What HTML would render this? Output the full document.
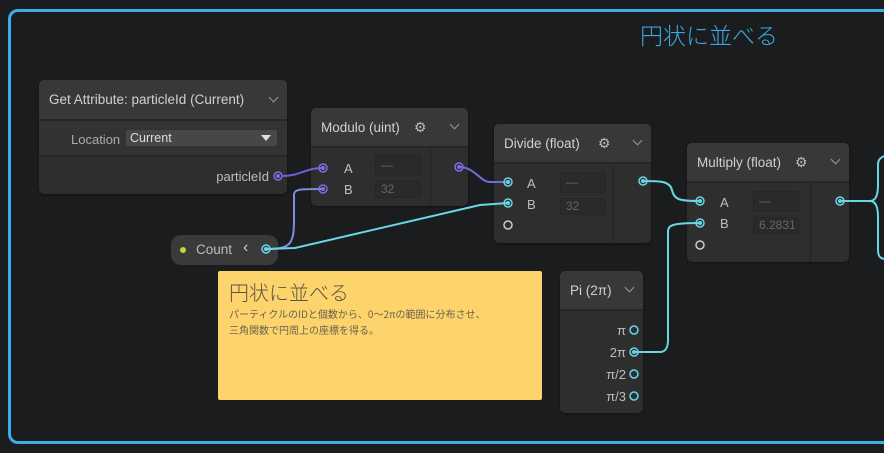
<!DOCTYPE html>
<html><head><meta charset="utf-8"><style>
*{box-sizing:border-box;margin:0;padding:0}
body{width:884px;height:453px;background:#1c1d1f;position:relative;overflow:hidden;font-family:"Liberation Sans","Noto Sans CJK JP",sans-serif;color:#c8c8c8;font-size:13px}
.grp{position:absolute;left:8px;top:9px;width:900px;height:435px;border:3px solid #3aaee6;border-radius:10px;background:#1b1c1e}
.ttl{position:absolute;left:640px;top:17px;font-size:23px;color:#3aa9df;font-family:"Noto Sans CJK JP",sans-serif;font-weight:300}
.node{position:absolute;background:#2e2e2e;border-radius:5px;overflow:hidden;box-shadow:0 1px 2px #0006}
.hd{background:#383838;border-bottom:2px solid #262626;position:absolute;left:0;right:0;top:0;font-size:13.5px;color:#d0d0d0;padding-left:10px;display:flex;align-items:center}
.chev{position:absolute;right:10px;width:7px;height:7px;border-right:1.5px solid #999;border-bottom:1.5px solid #999;transform:rotate(45deg);top:50%;margin-top:-6px}
.gear{position:absolute;font-size:14px;color:#bbb}
.abs{position:absolute}
.fld{position:absolute;background:#2a2a2a;border:1px solid #262626;color:#666;font-size:12px;padding-left:5px;border-radius:2px}
.lbl{position:absolute;font-size:13px;color:#bdbdbd}
.outcol{position:absolute;top:0;bottom:0;background:#2b2b2b;border-left:1px solid #232323}
</style></head><body>
<div class="grp"></div>
<div class="ttl">円状に並べる</div>

<div class="node" style="left:39px;top:80px;width:248px;height:114px">
 <div class="hd" style="height:41px">Get Attribute: particleId (Current)<div class="chev"></div></div>
 <div class="abs" style="left:0;right:0;top:41px;height:36px;background:#333;border-bottom:2px solid #262626"></div>
 <div class="lbl" style="left:32px;top:52px;color:#aaa">Location</div>
 <div class="abs" style="left:87px;top:50px;width:151px;height:16px;background:#474747;border-radius:2px;font-size:12.5px;color:#ddd;padding-left:4px;line-height:16px">Current<span style="position:absolute;right:6px;top:5px;border-left:5px solid transparent;border-right:5px solid transparent;border-top:6px solid #ddd"></span></div>
 <div class="lbl" style="right:18px;top:89px">particleId</div>
</div>

<div class="node" style="left:311px;top:108px;width:157px;height:98px">
 <div class="hd" style="height:40px">Modulo (uint)<div class="chev"></div></div>
 <div class="gear" style="left:103px;top:11px">⚙</div>
 <div class="outcol" style="left:119px;top:40px"></div>
 <div class="lbl" style="left:33px;top:53px">A</div><div class="fld" style="left:64px;top:47px;width:46px;height:21px;line-height:19px">—</div>
 <div class="lbl" style="left:33px;top:74px">B</div><div class="fld" style="left:64px;top:73px;width:46px;height:17px;line-height:15px">32</div>
</div>

<div class="node" style="left:494px;top:124px;width:157px;height:119px">
 <div class="hd" style="height:40px">Divide (float)<div class="chev"></div></div>
 <div class="gear" style="left:104px;top:11px">⚙</div>
 <div class="outcol" style="left:119px;top:40px"></div>
 <div class="lbl" style="left:33px;top:52px">A</div><div class="fld" style="left:66px;top:48px;width:46px;height:21px;line-height:19px">—</div>
 <div class="lbl" style="left:33px;top:73px">B</div><div class="fld" style="left:66px;top:74px;width:46px;height:17px;line-height:15px">32</div>
</div>

<div class="node" style="left:687px;top:143px;width:162px;height:119px">
 <div class="hd" style="height:40px">Multiply (float)<div class="chev"></div></div>
 <div class="gear" style="left:108px;top:11px">⚙</div>
 <div class="outcol" style="left:123px;top:40px"></div>
 <div class="lbl" style="left:33px;top:52px">A</div><div class="fld" style="left:66px;top:48px;width:46px;height:21px;line-height:19px">—</div>
 <div class="lbl" style="left:33px;top:73px">B</div><div class="fld" style="left:66px;top:74px;width:46px;height:17px;line-height:15px">6.2831</div>
</div>

<div class="abs" style="left:171px;top:235px;width:107px;height:30px;background:#3a3a3a;border-radius:10px"></div>
<div class="abs" style="left:180px;top:247px;width:6px;height:6px;border-radius:50%;background:#c2d43c"></div>
<div class="lbl" style="left:196px;top:242px;font-size:13.5px">Count</div>
<div class="lbl" style="left:243px;top:239px;font-size:16px;color:#ccc">‹</div>

<div class="abs" style="left:218px;top:271px;width:324px;height:129px;background:#fdd46b;border-radius:2px;color:#666;font-family:'Noto Sans CJK JP',sans-serif">
 <div style="position:absolute;left:11px;top:6px;font-size:20px;font-weight:300;color:#5a5448">円状に並べる</div>
 <div style="position:absolute;left:11px;top:35px;font-size:10px;line-height:16px;color:#6a6150">パーティクルのIDと個数から、0〜2πの範囲に分布させ、<br>三角関数で円周上の座標を得る。</div>
</div>

<div class="node" style="left:560px;top:271px;width:83px;height:142px">
 <div class="hd" style="height:40px">Pi (2π)<div class="chev"></div></div>
 <div class="lbl" style="right:17px;top:52px">π</div>
 <div class="lbl" style="right:17px;top:74px">2π</div>
 <div class="lbl" style="right:17px;top:96px">π/2</div>
 <div class="lbl" style="right:17px;top:118px">π/3</div>
</div>

<svg class="abs" style="left:0;top:0" width="884" height="453">
 <g fill="none" stroke-width="2">
  <path d="M283 176 C300 176 305 168 323 168" stroke="#6c5fd8"/>
  <path d="M266 249 C290 249 294 245 294 220 L294 195 C294 189 300 189 323 189" stroke="#7a8ee0"/>
  <path d="M266 249 L295 248 L480 205 L508 203" stroke="#6ad6e6"/>
  <path d="M459 167 C475 167 480 182 490 182 L508 182" stroke="#6c6fd8"/>
  <path d="M643 181 C660 181 670 181 672 190 C674 200 680 201 700 201" stroke="#6ad6e6"/>
  <path d="M635 352 L660 352 C665 352 668 348 668 340 L668 232 C668 225 672 223 700 223" stroke="#6ad6e6"/>
  <path d="M840 201 L870 201 C876 201 878 195 878 185 L878 165 C878 160 880 158 884 156 M870 201 C876 201 878 207 878 217 L878 250 C878 256 880 258 884 259" stroke="#6ad6e6"/>
 </g>
 <g stroke-width="1.5" fill="none">
  <circle cx="278" cy="176" r="4" stroke="#7a70e6"/><circle cx="278" cy="176" r="2" fill="#7a70e6"/>
  <circle cx="323" cy="168" r="4" stroke="#7a70e6"/><circle cx="323" cy="168" r="2" fill="#7a70e6"/>
  <circle cx="323" cy="189" r="4" stroke="#7a70e6"/><circle cx="323" cy="189" r="2" fill="#7a70e6"/>
  <circle cx="459" cy="167" r="4" stroke="#7a70e6"/><circle cx="459" cy="167" r="2" fill="#7a70e6"/>
  <circle cx="266" cy="249" r="4" stroke="#6ad6e6"/><circle cx="266" cy="249" r="2" fill="#6ad6e6"/>
  <circle cx="508" cy="182" r="4" stroke="#6ad6e6"/><circle cx="508" cy="182" r="2" fill="#6ad6e6"/>
  <circle cx="508" cy="203" r="4" stroke="#6ad6e6"/><circle cx="508" cy="203" r="2" fill="#6ad6e6"/>
  <circle cx="508" cy="225" r="4" stroke="#ccc"/>
  <circle cx="643" cy="181" r="4" stroke="#6ad6e6"/><circle cx="643" cy="181" r="2" fill="#6ad6e6"/>
  <circle cx="700" cy="201" r="4" stroke="#6ad6e6"/><circle cx="700" cy="201" r="2" fill="#6ad6e6"/>
  <circle cx="700" cy="223" r="4" stroke="#6ad6e6"/><circle cx="700" cy="223" r="2" fill="#6ad6e6"/>
  <circle cx="700" cy="245" r="4" stroke="#ccc"/>
  <circle cx="840" cy="201" r="4" stroke="#6ad6e6"/><circle cx="840" cy="201" r="2" fill="#6ad6e6"/>
  <circle cx="634" cy="330" r="4" stroke="#6ad6e6"/>
  <circle cx="634" cy="352" r="4" stroke="#6ad6e6"/><circle cx="634" cy="352" r="2" fill="#6ad6e6"/>
  <circle cx="634" cy="374" r="4" stroke="#6ad6e6"/>
  <circle cx="634" cy="396" r="4" stroke="#6ad6e6"/>
 </g>
</svg>
</body></html>
